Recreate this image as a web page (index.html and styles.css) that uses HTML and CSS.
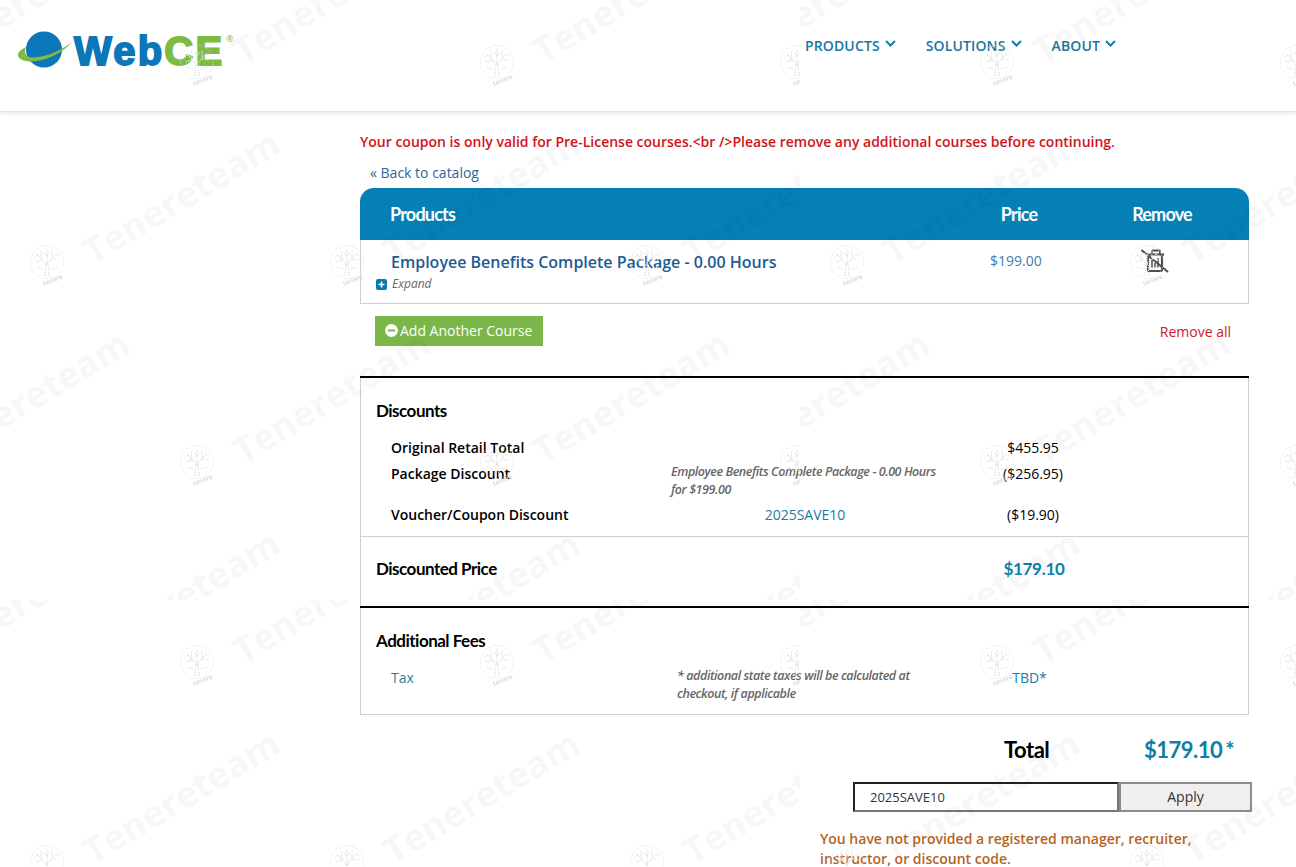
FILE: index.html
```html
<!DOCTYPE html>
<html lang="en">
<head>
<meta charset="utf-8">
<title>WebCE Cart</title>
<link rel="stylesheet" href="styles.css">
</head>
<body>
<header class="site-header">
  <a class="logo" href="#">
    <svg class="logo-globe" width="56" height="40" viewBox="0 0 56 40" aria-hidden="true">
      <circle cx="27" cy="18.5" r="18" fill="#0b76b8"/>
      <path d="M9 16 C4 18.500 0.500 21.500 1 24.500 C2 28.500 8 30.500 14 30.500 C28 30.500 46 22 55 11 C46 18 30 26.500 16 26.500 C9 26.500 6.500 22 9 16 Z" fill="#7dbb42"/>
    </svg>
    <span class="logo-text"><span class="logo-web">Web</span><span class="logo-ce">CE</span></span><span class="logo-reg">®</span>
  </a>
  <nav class="nav">
    <a class="nav-item" href="#">PRODUCTS<svg class="chev" width="11" height="7" viewBox="0 0 11 7"><path d="M1 1 L5.500 5.500 L10 1" fill="none" stroke="#1b7ba3" stroke-width="2"/></svg></a>
    <a class="nav-item" href="#">SOLUTIONS<svg class="chev" width="11" height="7" viewBox="0 0 11 7"><path d="M1 1 L5.500 5.500 L10 1" fill="none" stroke="#1b7ba3" stroke-width="2"/></svg></a>
    <a class="nav-item" href="#">ABOUT<svg class="chev" width="11" height="7" viewBox="0 0 11 7"><path d="M1 1 L5.500 5.500 L10 1" fill="none" stroke="#1b7ba3" stroke-width="2"/></svg></a>
  </nav>
</header>

<main class="cart">
  <p class="coupon-error">Your coupon is only valid for Pre-License courses.&lt;br /&gt;Please remove any additional courses before continuing.</p>
  <a class="back-link" href="#">« Back to catalog</a>

  <div class="products-head">
    <span class="head-products">Products</span>
    <span class="head-price">Price</span>
    <span class="head-remove">Remove</span>
  </div>
  <div class="product-row">
    <div class="product-info">
      <a class="product-title" href="#">Employee Benefits Complete Package - 0.00 Hours</a>
      <div class="expand">
        <svg width="11" height="11" viewBox="0 0 11 11" aria-hidden="true"><rect width="11" height="11" rx="2" fill="#0b78b0"/><path d="M5.500 2.500 V8.500 M2.500 5.500 H8.500" stroke="#fff" stroke-width="1.500"/></svg>
        <em>Expand</em>
      </div>
    </div>
    <span class="product-price">$199.00</span>
    <span class="product-remove">
      <svg width="28" height="24" viewBox="0 0 28 24" aria-hidden="true">
        <path d="M11 5 V2.500 Q11 1.500 12 1.500 H18 Q19 1.500 19 2.500 V5" fill="none" stroke="#4d4d4d" stroke-width="1.800"/>
        <path d="M5 5.500 H23" stroke="#4d4d4d" stroke-width="2.200"/>
        <path d="M7 6 V20.500 Q7 22 8.500 22 H19.500 Q21 22 21 20.500 V6" fill="none" stroke="#4d4d4d" stroke-width="2.200"/>
        <path d="M11 11 V18.500 M14 14 V18.500 M17 9 V18.500" stroke="#4d4d4d" stroke-width="1.500"/>
        <path d="M0.500 1 L27 23" stroke="#4d4d4d" stroke-width="2"/>
      </svg>
    </span>
  </div>

  <div class="actions">
    <a class="add-course" href="#">
      <svg width="13" height="13" viewBox="0 0 13 13" aria-hidden="true"><circle cx="6.500" cy="6.500" r="6.500" fill="#fff"/><path d="M3 6.500 H10" stroke="#7ab648" stroke-width="2"/></svg>
      Add Another Course
    </a>
    <a class="remove-all" href="#">Remove all</a>
  </div>

  <div class="summary">
    <section class="summary-block discounts">
      <h2 class="block-title">Discounts</h2>
      <div class="line">
        <span class="line-label">Original Retail Total</span>
        <span class="line-note"></span>
        <span class="line-value">$455.95</span>
      </div>
      <div class="line">
        <span class="line-label">Package Discount</span>
        <span class="line-note">Employee Benefits Complete Package - 0.00 Hours for $199.00</span>
        <span class="line-value">($256.95)</span>
      </div>
      <div class="line">
        <span class="line-label">Voucher/Coupon Discount</span>
        <span class="line-code">2025SAVE10</span>
        <span class="line-value">($19.90)</span>
      </div>
    </section>
    <section class="discounted">
      <h2 class="block-title">Discounted Price</h2>
      <span class="discounted-value">$179.10</span>
    </section>
    <section class="summary-block fees">
      <h2 class="block-title">Additional Fees</h2>
      <div class="line">
        <span class="line-label tax">Tax</span>
        <span class="line-note tax-note">* additional state taxes will be calculated at checkout, if applicable</span>
        <span class="line-value tbd">TBD*</span>
      </div>
    </section>
  </div>

  <div class="total">
    <span class="total-label">Total</span>
    <span class="total-value">$179.10<span class="total-star">*</span></span>
  </div>

  <form class="coupon">
    <input class="coupon-input" type="text" value="2025SAVE10">
    <button class="coupon-apply" type="button">Apply</button>
  </form>

  <p class="coupon-warning">You have not provided a registered manager, recruiter, instructor, or discount code.</p>
</main>

<svg class="watermark" width="1296" height="867" aria-hidden="true">
  <defs>
    <g id="stamp">
      <circle cx="0" cy="0" r="16.500" fill="none" stroke="#dcdcdc" stroke-width="1" stroke-dasharray="1 1.500"/>
      <path d="M-2 14 L-1 2 M2 14 L1 2 M0 3 L-9 -7 M0 2 L9 -8 M-5 -2 L-12 0 M5 -3 L12 -2 M-5 -3 L-6 -11 M5 -4 L5 -12 M0 1 V-13 M0 -6 L-3 -10 M0 -6 L3 -10 M-9 -7 L-12 -5 M9 -8 L12 -6 M-4 7 L-11 5 M4 7 L11 5" fill="none" stroke="#e2e2e2" stroke-width="1.200" stroke-dasharray="1.500 1"/>
      <text x="-3" y="24" class="wm-small" transform="rotate(-22 -3 24)">tenere</text>
      <text x="46" y="3" class="wm-big" transform="rotate(-31 46 3)">Tenereteam</text>
    </g>
    <pattern id="wm" width="800" height="600" patternUnits="userSpaceOnUse">
      <use href="#stamp" x="-103" y="62"/>
      <use href="#stamp" x="197" y="62"/>
      <use href="#stamp" x="497" y="62"/>
      <use href="#stamp" x="797" y="62"/>
      <use href="#stamp" x="47" y="262"/>
      <use href="#stamp" x="347" y="262"/>
      <use href="#stamp" x="647" y="262"/>
      <use href="#stamp" x="-103" y="462"/>
      <use href="#stamp" x="197" y="462"/>
      <use href="#stamp" x="497" y="462"/>
      <use href="#stamp" x="797" y="462"/>
      <use href="#stamp" x="47" y="662"/>
      <use href="#stamp" x="347" y="662"/>
      <use href="#stamp" x="647" y="662"/>
    </pattern>
  </defs>
  <rect width="1296" height="867" fill="url(#wm)"/>
</svg>
</body>
</html>
```

FILE: styles.css
```css
* { box-sizing: border-box; }
html, body { margin: 0; padding: 0; }
body {
  position: relative;
  height: 867px;
  overflow: hidden;
  background: #fff;
  color: #000;
  font-family: "Open Sans", "Liberation Sans", sans-serif;
  font-size: 14px;
}
a { text-decoration: none; color: inherit; }
h2, p { margin: 0; }

.site-header {
  height: 112px;
  display: flex;
  justify-content: space-between;
  align-items: flex-start;
  padding: 0 180px 0 17px;
  border-bottom: 1px solid #e4e4e4;
  box-shadow: 0 2px 4px rgba(0, 0, 0, .08);
}
.logo { display: flex; align-items: flex-start; padding-top: 31px; }
.logo-globe { display: block; flex: none; }
.logo-text {
  margin: -3px 0 0 1px;
  font-family: "Liberation Sans", Arial, sans-serif;
  font-weight: 700;
  font-size: 40px;
  line-height: 46px;
  letter-spacing: 2.2px;
  -webkit-text-stroke: 1.800px currentColor;
}
.logo-web { color: #0b76b8; }
.logo-ce { color: #7dbb42; }
.logo-reg { margin: 0 0 0 2px; font-size: 9px; line-height: 16px; color: #7dbb42; }

.nav { display: flex; gap: 30px; padding-top: 36px; }
.nav-item {
  display: flex;
  align-items: flex-start;
  gap: 5px;
  color: #1b76a0;
  font-weight: 600;
  font-size: 14px;
  line-height: 20px;
  letter-spacing: .13px;
}
.chev { margin-top: 4px; }

.cart { width: 889px; margin-left: 360px; }
.coupon-error {
  margin-top: 20px;
  color: #d3121a;
  font-weight: 600;
  font-size: 14px;
  line-height: 20px;
  white-space: nowrap;
}
.back-link {
  display: block;
  margin: 11px 0 5px 10px;
  color: #28679c;
  font-size: 14px;
  line-height: 20px;
}

.products-head {
  display: grid;
  grid-template-columns: 566px 126px 1fr;
  align-items: center;
  height: 52px;
  padding: 0 0 0 30px;
  background: #0480b6;
  border-radius: 14px 14px 0 0;
  color: #fff;
  font-family: Lato, "Open Sans", sans-serif;
  font-weight: 700;
  font-size: 18px;
  letter-spacing: -.8px;
}
.head-price, .head-remove { text-align: center; }
.head-remove { padding-right: 7px; }

.product-row {
  display: grid;
  grid-template-columns: 614px 86px 1fr;
  height: 64px;
  padding-left: 15px;
  border: 1px solid #cfcfcf;
  border-top: 0;
}
.product-info { padding-top: 11px; }
.product-title {
  display: block;
  margin-left: 15px;
  color: #1e5a96;
  font-weight: 600;
  font-size: 16px;
  line-height: 22px;
}
.expand { display: flex; align-items: center; gap: 5px; margin-top: 3px; line-height: 16px; color: #666; font-size: 12px; }
.product-price { padding-top: 12px; color: #3a80b3; font-size: 14px; line-height: 18px; }
.product-remove { padding: 9px 0 0 65px; }
.product-remove svg { display: block; }

.actions {
  display: flex;
  justify-content: space-between;
  align-items: center;
  height: 30px;
  margin: 12px 0 30px;
  padding: 0 18px 0 15px;
}
.add-course {
  display: flex;
  align-items: center;
  gap: 2px;
  width: 168px;
  height: 30px;
  padding: 0 0 1px 10px;
  background: #7ab648;
  color: #fff;
  font-size: 14px;
}
.remove-all { color: #c9181f; font-size: 14px; }

.summary {
  border: 1px solid #cfcfcf;
  border-width: 0 1px 1px;
}
.summary-block { border-top: 2px solid #000; margin: 0 -1px; padding: 22px 16px 0; }
.discounts { padding-bottom: 8px; border-bottom: 1px solid #cfcfcf; }
.fees { padding-bottom: 11px; }
.block-title {
  font-family: Lato, "Open Sans", sans-serif;
  font-weight: 700;
  font-size: 17px;
  line-height: 22px;
  letter-spacing: -.5px;
}
.discounts .block-title, .fees .block-title { margin-bottom: 13px; }
.line {
  display: grid;
  grid-template-columns: 280px 268px 188px;
  padding-left: 15px;
  font-size: 14px;
  line-height: 26px;
}
.line-label { font-weight: 600; color: #000; }
.line-note {
  color: #666;
  font-style: italic;
  font-weight: 600;
  font-size: 12.500px;
  line-height: 18px;
  letter-spacing: -.42px;
  padding: 2px 0 3px;
}
.line-code { color: #1b7ba3; font-size: 14px; text-align: center; }
.line-value { font-weight: 500; font-size: 14px; text-align: center; }
.tax { color: #2a7fa8; font-weight: 500; }
.line-note.tax-note { padding: 2px 0 0 6px; }
.tbd { color: #1b7ba3; font-weight: 400; padding-right: 7px; }

.discounted {
  display: flex;
  align-items: center;
  height: 69px;
  padding: 0 16px 6px 15px;
}
.discounted .block-title { width: 579px; }
.discounted-value {
  width: 158px;
  text-align: center;
  color: #0d7fa8;
  font-family: Lato, "Open Sans", sans-serif;
  font-weight: 700;
  font-size: 17px;
  letter-spacing: -.3px;
}

.total {
  display: flex;
  align-items: center;
  height: 30px;
  margin-top: 19px;
  padding-left: 644px;
  font-family: Lato, "Open Sans", sans-serif;
  font-weight: 700;
  font-size: 22px;
  letter-spacing: -.5px;
}
.total-label { width: 140px; color: #000; }
.total-value { color: #0d7fa8; white-space: nowrap; }
.total-star { margin-left: 3px; }

.coupon { display: flex; margin: 18px -3px 0 493px; }
.coupon-input {
  width: 266px;
  height: 30px;
  padding: 0 15px;
  border: 2px solid;
  border-color: #222 #777 #777 #222;
  background: #fff;
  color: #333;
  font-family: "Open Sans", sans-serif;
  font-size: 13px;
  border-radius: 0;
  outline: 0;
}
.coupon-apply {
  width: 133px;
  height: 30px;
  padding: 0 0 2px;
  border: 2px solid #8c8c8c;
  background: #efefef;
  color: #333;
  font-family: "Open Sans", sans-serif;
  font-size: 14px;
  border-radius: 0;
}
.coupon-warning {
  width: 410px;
  margin: 17px 0 0 460px;
  color: #b4641e;
  font-weight: 600;
  font-size: 14px;
  line-height: 20px;
}

.watermark { position: absolute; left: 0; top: 0; pointer-events: none; }
.wm-big { font-family: "Open Sans", sans-serif; font-weight: 700; font-size: 36px; letter-spacing: .3px; fill: #000; fill-opacity: .032; }
.wm-small { font-family: "Open Sans", sans-serif; font-weight: 600; font-size: 6.500px; fill: #d4d4d4; }
```
